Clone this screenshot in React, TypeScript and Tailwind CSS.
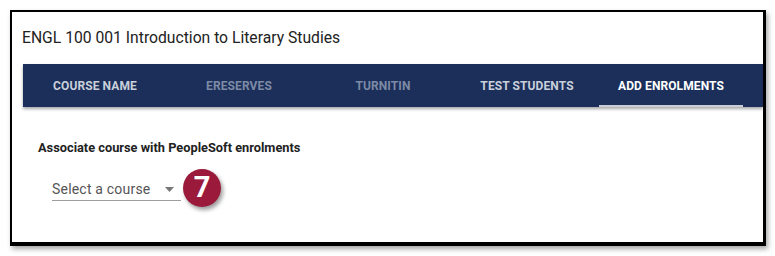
import React from 'react';

const tabs = [
  { label: 'COURSE NAME', tone: 'text-[#c9cfdb]' },
  { label: 'ERESERVES', tone: 'text-[#7d8aa5]' },
  { label: 'TURNITIN', tone: 'text-[#7d8aa5]' },
  { label: 'TEST STUDENTS', tone: 'text-[#c9cfdb]' },
  { label: 'ADD ENROLMENTS', tone: 'text-white', active: true },
];

export default function App() {
  return (
    <div className="w-[775px] h-[256px] bg-white pt-[10px] pl-[10px] font-['Roboto',sans-serif]">
      <div className="w-[756px] h-[236px] bg-white border-black border-t-2 border-l-2 border-r-[3px] border-b-[4px] shadow-[2px_3px_5px_rgba(0,0,0,0.35)] overflow-hidden">
        {/* Titre du cours */}
        <div className="pl-[10px] pt-[14px] text-[15.7px] leading-[24px] text-[#222]">
          ENGL 100 001 Introduction to Literary Studies
        </div>

        {/* Barre d'onglets */}
        <div className="mt-[14px] ml-[11px] h-[43px] bg-[#1b2f5a] flex shadow-[0_2px_3px_rgba(0,0,0,0.35)]">
          {tabs.map((t) => (
            <div
              key={t.label}
              className={`relative w-[144px] flex items-center justify-center text-[12px] font-bold tracking-[0.1px] ${t.tone}`}
            >
              {t.label}
              {t.active && <div className="absolute left-0 right-0 bottom-0 h-[2px] bg-[#c8ccd4]" />}
            </div>
          ))}
        </div>

        {/* Contenu */}
        <div className="pl-[26px] mt-[31px]">
          <div className="text-[12.8px] leading-[20px] font-bold text-[#222]">
            Associate course with PeopleSoft enrolments
          </div>
          <div className="flex items-start mt-[20px] ml-[14px]">
            <div className="w-[129px] h-[23px] flex items-center justify-between border-b border-[#9e9e9e] pr-[7px]">
              <span className="text-[14px] leading-[20px] text-[#555] tracking-[0.2px]">Select a course</span>
              <svg width="9" height="5" viewBox="0 0 9 5" className="mt-[1px]">
                <path d="M0 0h9L4.5 5z" fill="#777" />
              </svg>
            </div>
            <div className="ml-[2px] -mt-[9px] w-[38px] h-[38px] rounded-full bg-[#9b1a3c] flex items-center justify-center text-white text-[29px] font-bold shadow-[2px_3px_4px_rgba(0,0,0,0.4)]">
              7
            </div>
          </div>
        </div>
      </div>
    </div>
  );
}
